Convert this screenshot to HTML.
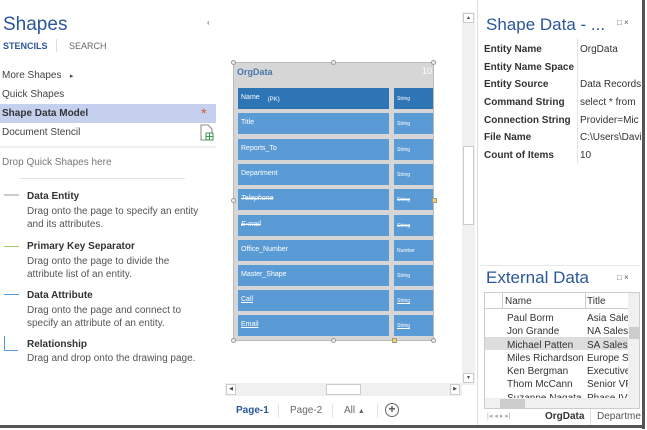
<!DOCTYPE html><html><head><style>
*{margin:0;padding:0;box-sizing:border-box}
body{width:647px;height:430px;overflow:hidden;background:#fff;font-family:"Liberation Sans",sans-serif;position:relative;color:#444}
.a{position:absolute;white-space:nowrap}
.row{position:absolute;left:238px;width:151px;height:21px;background:#5b9bd5;color:#fff;font-size:7px;padding:6px 3px}
.typ{position:absolute;left:394px;width:39px;height:21px;background:#5b9bd5;color:#fff;font-size:5px;padding:8px 3px}
.sd{position:absolute;left:484px;font-size:10px;font-weight:bold;color:#333}
.sv{position:absolute;left:580px;font-size:10px;color:#333}
.ed{position:absolute;font-size:10px;color:#333}
.h{position:absolute;width:5px;height:5px;border:1px solid #999;border-radius:50%;background:#eee}
</style></head><body>
<div class="a" style="left:3px;top:14px;font-size:19px;color:#2b579a">Shapes</div>
<div class="a" style="left:207px;top:18px;font-size:8px;color:#555">‹</div>
<div class="a" style="left:3px;top:41px;font-size:9px;font-weight:bold;color:#2b579a">STENCILS</div>
<div class="a" style="left:56px;top:39px;width:1px;height:13px;background:#ddd"></div>
<div class="a" style="left:69px;top:41px;font-size:9px;color:#666">SEARCH</div>
<div class="a" style="left:2px;top:70px;font-size:10px;color:#444">More Shapes &nbsp; <span style="font-size:7px">▸</span></div>
<div class="a" style="left:2px;top:89px;font-size:10px;color:#444">Quick Shapes</div>
<div class="a" style="left:0;top:104px;width:216px;height:19px;background:#c5d0ee"></div>
<div class="a" style="left:2px;top:108px;font-size:10px;font-weight:bold;color:#333">Shape Data Model</div>
<div class="a" style="left:201px;top:105px;font-size:14px;color:#e0533a">*</div>
<div class="a" style="left:2px;top:127px;font-size:10px;color:#444">Document Stencil</div>
<svg class="a" style="left:199px;top:124px" width="16" height="18"><path d="M2 1h7l4 4v11H2z" fill="#fff" stroke="#888"/><rect x="7" y="9" width="7" height="7" fill="#fff" stroke="#3a9a4a"/><path d="M10.5 9v7M7 12.5h7" stroke="#3a9a4a"/></svg>
<div class="a" style="left:0;top:146px;width:216px;height:2px;background:#eee"></div>
<div class="a" style="left:2px;top:157px;font-size:10px;color:#777">Drop Quick Shapes here</div>
<div class="a" style="left:20px;top:178px;width:165px;height:1px;background:#e3e3e3"></div>
<div class="a" style="left:4px;top:194px;width:15px;height:2px;background:#ccc"></div>
<div class="a" style="left:27px;top:191px;font-size:10px;font-weight:bold;color:#333">Data Entity</div>
<div class="a" style="left:27px;top:205px;font-size:10px;line-height:13px;color:#555">Drag onto the page to specify an entity<br>and its attributes.</div>
<div class="a" style="left:4px;top:246px;width:15px;height:1px;background:#9c6"></div>
<div class="a" style="left:27px;top:241px;font-size:10px;font-weight:bold;color:#333">Primary Key Separator</div>
<div class="a" style="left:27px;top:255px;font-size:10px;line-height:13px;color:#555">Drag onto the page to divide the<br>attribute list of an entity.</div>
<div class="a" style="left:4px;top:294px;width:15px;height:1px;background:#5b9bd5"></div>
<div class="a" style="left:27px;top:290px;font-size:10px;font-weight:bold;color:#333">Data Attribute</div>
<div class="a" style="left:27px;top:304px;font-size:10px;line-height:13px;color:#555">Drag onto the page and connect to<br>specify an attribute of an entity.</div>
<div class="a" style="left:4px;top:336px;width:14px;height:15px;border-left:1px solid #5b9bd5;border-bottom:1px solid #5b9bd5"></div>
<div class="a" style="left:27px;top:339px;font-size:10px;font-weight:bold;color:#333">Relationship</div>
<div class="a" style="left:27px;top:353px;font-size:10px;color:#555">Drag and drop onto the drawing page.</div>
<div class="a" style="left:233px;top:62px;width:201px;height:279px;background:#d6d6d6;border:1px solid #bbb"></div>
<div class="a" style="left:237px;top:67px;font-size:9px;font-weight:bold;color:#4a76a8">OrgData</div>
<div class="a" style="left:422px;top:66px;font-size:9px;color:#fff">10</div>
<div class="row" style="top:88px;background:#2e75b6">Name<sub style="font-size:6px;margin-left:8px">(PK)</sub></div><div class="typ" style="top:88px;background:#2e75b6">String</div>
<div class="row" style="top:113px">Title</div><div class="typ" style="top:113px">String</div>
<div class="row" style="top:139px">Reports_To</div><div class="typ" style="top:139px">String</div>
<div class="row" style="top:164px">Department</div><div class="typ" style="top:164px">String</div>
<div class="row" style="top:189px;font-style:italic;text-decoration:line-through">Telephone</div><div class="typ" style="top:189px;text-decoration:line-through">String</div>
<div class="row" style="top:215px;font-style:italic;text-decoration:line-through">E-mail</div><div class="typ" style="top:215px;text-decoration:line-through">String</div>
<div class="row" style="top:240px">Office_Number</div><div class="typ" style="top:240px">Number</div>
<div class="row" style="top:265px">Master_Shape</div><div class="typ" style="top:265px">String</div>
<div class="row" style="top:290px;text-decoration:underline">Call</div><div class="typ" style="top:290px;text-decoration:underline">String</div>
<div class="row" style="top:315px;text-decoration:underline">Email</div><div class="typ" style="top:315px;text-decoration:underline">String</div>
<div class="h" style="left:231px;top:60px"></div><div class="h" style="left:331px;top:60px"></div><div class="h" style="left:431px;top:60px"></div>
<div class="h" style="left:231px;top:198px"></div>
<div class="h" style="left:231px;top:338px"></div><div class="h" style="left:331px;top:338px"></div><div class="h" style="left:431px;top:338px"></div>
<div class="a" style="left:392px;top:338px;width:5px;height:5px;background:#f5d94a;border:1px solid #999"></div>
<div class="a" style="left:432px;top:198px;width:5px;height:5px;background:#f5d94a;border:1px solid #999"></div>
<div class="a" style="left:462px;top:12px;width:13px;height:373px;background:#f0f0f0"></div>
<div class="a" style="left:463px;top:13px;width:11px;height:10px;background:#fff;border:1px solid #ccc;font-size:5px;text-align:center;line-height:8px">▲</div>
<div class="a" style="left:463px;top:146px;width:11px;height:79px;background:#fff;border:1px solid #ccc"></div>
<div class="a" style="left:463px;top:373px;width:11px;height:10px;background:#fff;border:1px solid #ccc;font-size:5px;text-align:center;line-height:8px">▼</div>
<div class="a" style="left:225px;top:383px;width:237px;height:13px;background:#f0f0f0"></div>
<div class="a" style="left:226px;top:384px;width:10px;height:11px;background:#fff;border:1px solid #ccc;font-size:5px;text-align:center;line-height:9px">◀</div>
<div class="a" style="left:326px;top:384px;width:35px;height:11px;background:#fff;border:1px solid #ccc"></div>
<div class="a" style="left:450px;top:384px;width:10px;height:11px;background:#fff;border:1px solid #ccc;font-size:5px;text-align:center;line-height:9px">▶</div>
<div class="a" style="left:236px;top:405px;font-size:10px;font-weight:bold;color:#2b579a">Page-1</div>
<div class="a" style="left:278px;top:404px;width:1px;height:14px;background:#e3e3e3"></div>
<div class="a" style="left:290px;top:405px;font-size:10px;color:#666">Page-2</div>
<div class="a" style="left:332px;top:404px;width:1px;height:14px;background:#e3e3e3"></div>
<div class="a" style="left:344px;top:405px;font-size:10px;color:#666">All <span style="font-size:7px">▲</span></div>
<div class="a" style="left:377px;top:404px;width:1px;height:14px;background:#e3e3e3"></div>
<div class="a" style="left:385px;top:403px;width:14px;height:14px;border:1.5px solid #666;border-radius:50%;font-size:12px;line-height:11px;text-align:center;color:#555;font-weight:bold">+</div>
<div class="a" style="left:477px;top:0;width:1px;height:426px;background:#ddd"></div>
<div class="a" style="left:486px;top:15px;font-size:17px;color:#2b579a">Shape Data - ...</div>
<div class="a" style="left:617px;top:18px;font-size:8px;color:#555">□ ×</div>
<div class="a" style="left:577px;top:38px;width:1px;height:126px;background:#e5e5e5"></div>
<div class="sd" style="top:44px">Entity Name</div><div class="sv" style="top:44px">OrgData</div>
<div class="sd" style="top:62px">Entity Name Space</div>
<div class="sd" style="top:79px">Entity Source</div><div class="sv" style="top:79px">Data Records</div>
<div class="sd" style="top:97px">Command String</div><div class="sv" style="top:97px">select * from</div>
<div class="sd" style="top:115px">Connection String</div><div class="sv" style="top:115px">Provider=Mic</div>
<div class="sd" style="top:132px">File Name</div><div class="sv" style="top:132px">C:\Users\Davi</div>
<div class="sd" style="top:150px">Count of Items</div><div class="sv" style="top:150px">10</div>
<div class="a" style="left:480px;top:265px;width:160px;height:1px;background:#e8e8e8"></div>
<div class="a" style="left:486px;top:268px;font-size:17px;color:#2b579a">External Data</div>
<div class="a" style="left:617px;top:273px;font-size:8px;color:#555">□ ×</div>
<div class="a" style="left:484px;top:292px;width:156px;height:117px;border:1px solid #ccc;overflow:hidden;background:#fff">
<div class="a" style="left:0;top:0;width:156px;height:16px;border-bottom:1px solid #ccc"></div>
<div class="a" style="left:17px;top:0;width:1px;height:16px;background:#ccc"></div>
<div class="a" style="left:100px;top:0;width:1px;height:16px;background:#ccc"></div>
<div class="ed" style="left:20px;top:3px">Name</div><div class="ed" style="left:102px;top:3px">Title</div>
<div class="a" style="left:0;top:44px;width:143px;height:13px;background:#ddd"></div>
<div class="ed" style="left:22px;top:19px;line-height:13.3px">Paul Borm<br>Jon Grande<br>Michael Patten<br>Miles Richardson<br>Ken Bergman<br>Thom McCann<br>Suzanne Nagata</div>
<div class="ed" style="left:102px;top:19px;line-height:13.3px">Asia Sale<br>NA Sales<br>SA Sales<br>Europe S<br>Executive<br>Senior VF<br>Phase IV</div>
<div class="a" style="left:143px;top:0;width:13px;height:105px;background:#f0f0f0"></div>
<div class="a" style="left:144px;top:34px;width:11px;height:12px;background:#ccc"></div>
<div class="a" style="left:0;top:105px;width:156px;height:12px;background:#f0f0f0"></div>
<div class="a" style="left:15px;top:106px;width:25px;height:10px;background:#ccc"></div>
</div>
<div class="a" style="left:487px;top:412px;font-size:7px;color:#aaa">|◂ ◂ ▸ ▸|</div>
<div class="a" style="left:545px;top:411px;font-size:10px;font-weight:bold;color:#333">OrgData</div>
<div class="a" style="left:590px;top:409px;width:1px;height:16px;background:#ddd"></div>
<div class="a" style="left:597px;top:411px;font-size:10px;color:#555">Departme</div>
<div class="a" style="left:642px;top:0;width:3px;height:429px;background:#555"></div>
<div class="a" style="left:0;top:425px;width:645px;height:3px;background:#555"></div>
</body></html>
